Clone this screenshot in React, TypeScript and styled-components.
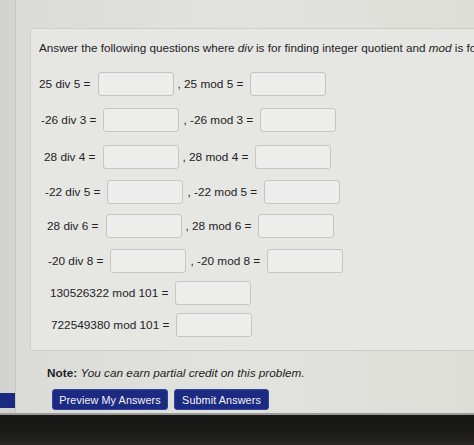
import React from "react";
import styled, { createGlobalStyle } from "styled-components";

const Global = createGlobalStyle`
  html, body { margin: 0; padding: 0; background: #141414; }
  body { font-family: "Liberation Sans", Arial, sans-serif; }
`;

const Frame = styled.div`
  width: 474px;
  height: 445px;
  display: flex;
  flex-direction: column;
  overflow: hidden;
`;

const Screen = styled.div`
  flex: 0 0 413px;
  display: flex;
  background: linear-gradient(90deg, #dadad6 0%, #e2e2de 50%, #deded9 100%);
  border-bottom: 2px solid #9a9a96;
`;

const Sidebar = styled.div`
  flex: 0 0 15px;
  display: flex;
  flex-direction: column;
  background: #d3d3cf;
  border-right: 1px solid #c4c4c0;
`;

const SideTab = styled.div`
  margin-top: auto;
  margin-bottom: 5px;
  height: 15px;
  background: #1b2a80;
`;

const Main = styled.div`
  flex: 1;
  min-width: 0;
  padding: 28px 0 0 14px;
  display: flex;
  flex-direction: column;
`;

const Panel = styled.div`
  margin-right: -40px;
  background: #e6e6e3;
  border: 1px solid #cdcdc9;
  border-radius: 3px;
  padding: 12px 0 13px 8px;
  display: flex;
  flex-direction: column;
  color: #232323;
  font-size: 11.8px;
`;

const Heading = styled.div`
  white-space: nowrap;
  line-height: 14px;
  margin-bottom: 17px;
  font-size: 11.7px;
`;

const Row = styled.div<{ $indent: number; $space: number }>`
  display: flex;
  align-items: center;
  gap: 5px;
  margin-top: ${(p) => p.$space}px;
  padding-left: ${(p) => p.$indent}px;
  white-space: nowrap;
  line-height: 14px;
`;

const Box = styled.div`
  width: 74px;
  height: 22px;
  border: 1px solid #c5c5c1;
  border-radius: 3px;
  background: #ededeb;
  margin-left: 2px;
`;

const Comma = styled.span`
  margin-left: -1px;
`;

const Note = styled.div`
  margin-top: 15px;
  padding-left: 17px;
  font-size: 11.8px;
  color: #1f1f1f;
  line-height: 14px;
  b { font-weight: bold; }
  i { font-style: italic; }
`;

const Buttons = styled.div`
  display: flex;
  gap: 6px;
  margin-top: 9px;
  padding-left: 22px;
`;

const Button = styled.button<{ $w: number }>`
  width: ${(p) => p.$w}px;
  height: 21px;
  background: #1c2a82;
  border: 1px solid #33449c;
  border-radius: 3px;
  color: #f4f4f8;
  font-family: "Liberation Sans", Arial, sans-serif;
  font-size: 10.8px;
  letter-spacing: 0.1px;
  padding: 0;
  display: flex;
  align-items: center;
  justify-content: center;
`;

const Bezel = styled.div`
  flex: 1;
  background: linear-gradient(180deg, #161616 0%, #1c1b19 60%, #2a2722 100%);
`;

const pairs: [string, string, number, number][] = [
  ["25 div 5 =", ", 25 mod 5 =", 0, 0],
  ["-26 div 3 =", ", -26 mod 3 =", 2, 12],
  ["28 div 4 =", ", 28 mod 4 =", 5, 13],
  ["-22 div 5 =", ", -22 mod 5 =", 6, 11],
  ["28 div 6 =", ", 28 mod 6 =", 8, 10],
  ["-20 div 8 =", ", -20 mod 8 =", 9, 11],
];

const singles: [string, number, number][] = [
  ["130526322 mod 101 =", 11, 8],
  ["722549380 mod 101 =", 12, 8],
];

export default function App() {
  return (
    <>
      <Global />
      <Frame>
        <Screen>
          <Sidebar>
            <SideTab />
          </Sidebar>
          <Main>
            <Panel>
              <Heading>
                Answer the following questions where <i>div</i> is for finding integer quotient and{" "}
                <i>mod</i> is for finding remainder.
              </Heading>
              {pairs.map(([a, b, ind, sp]) => (
                <Row key={a} $indent={ind} $space={sp}>
                  <span>{a}</span>
                  <Box />
                  <Comma>{b}</Comma>
                  <Box />
                </Row>
              ))}
              {singles.map(([a, ind, sp]) => (
                <Row key={a} $indent={ind} $space={sp}>
                  <span>{a}</span>
                  <Box />
                </Row>
              ))}
            </Panel>
            <Note>
              <b>Note:</b> <i>You can earn partial credit on this problem.</i>
            </Note>
            <Buttons>
              <Button $w={116}>Preview My Answers</Button>
              <Button $w={95}>Submit Answers</Button>
            </Buttons>
          </Main>
        </Screen>
        <Bezel />
      </Frame>
    </>
  );
}
